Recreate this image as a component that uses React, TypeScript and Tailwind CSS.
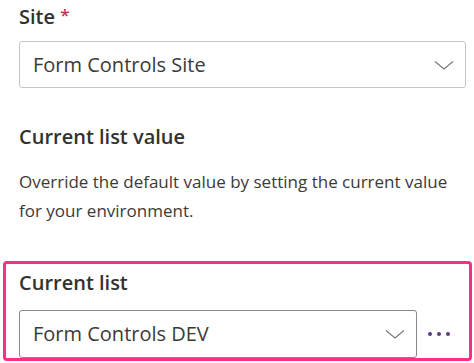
import React from "react";

function Chevron({ className }: { className?: string }) {
  return (
    <svg className={className} width="20" height="10" viewBox="0 0 20 10" fill="none">
      <polyline points="1,1.5 10,9 19,1.5" stroke="#797775" strokeWidth="1.1" />
    </svg>
  );
}

function Dropdown({ value, className }: { value: string; className: string }) {
  return (
    <div className={`flex items-center justify-between rounded-[3px] bg-white pl-[13px] pr-[11px] ${className}`}>
      <span className="text-[20px] leading-[28px] text-[#3b3a39]">{value}</span>
      <Chevron />
    </div>
  );
}

export default function App() {
  return (
    <div
      className="w-[474px] h-[363px] overflow-hidden bg-white text-[#323130]"
      style={{ fontFamily: '"Open Sans", "Noto Sans", sans-serif' }}
    >
      <div className="pl-[19px] pr-[8px] pt-[3px]">
        <div className="text-[20px] leading-[28px] font-semibold">
          Site <span className="relative top-[-3px] text-[17px] text-[#c4314b]">*</span>
        </div>
        <Dropdown value="Form Controls Site" className="mt-[9px] h-[47px] border border-[#c8c6c4]" />

        <div className="mt-[35px] text-[20px] leading-[28px] font-semibold">Current list value</div>
        <p className="mt-[16px] w-[442px] text-[17px] leading-[29px] text-[#3b3a39]">
          Override the default value by setting the current value for your environment.
        </p>
      </div>

      <div className="ml-[3px] mt-[36px] w-[469px] h-[100px] rounded-[4px] border-[3px] border-[#ff2d87] pl-[13px] pt-[5px]">
        <div className="text-[20px] leading-[28px] font-semibold">Current list</div>
        <div className="mt-[13px] flex items-center">
          <Dropdown value="Form Controls DEV" className="w-[398px] h-[48px] border border-[#8a8886]" />
          <div className="ml-[11px] flex gap-[5px]">
            <span className="block w-[4px] h-[4px] rounded-full bg-[#5c3d82]" />
            <span className="block w-[4px] h-[4px] rounded-full bg-[#5c3d82]" />
            <span className="block w-[4px] h-[4px] rounded-full bg-[#5c3d82]" />
          </div>
        </div>
      </div>
    </div>
  );
}
